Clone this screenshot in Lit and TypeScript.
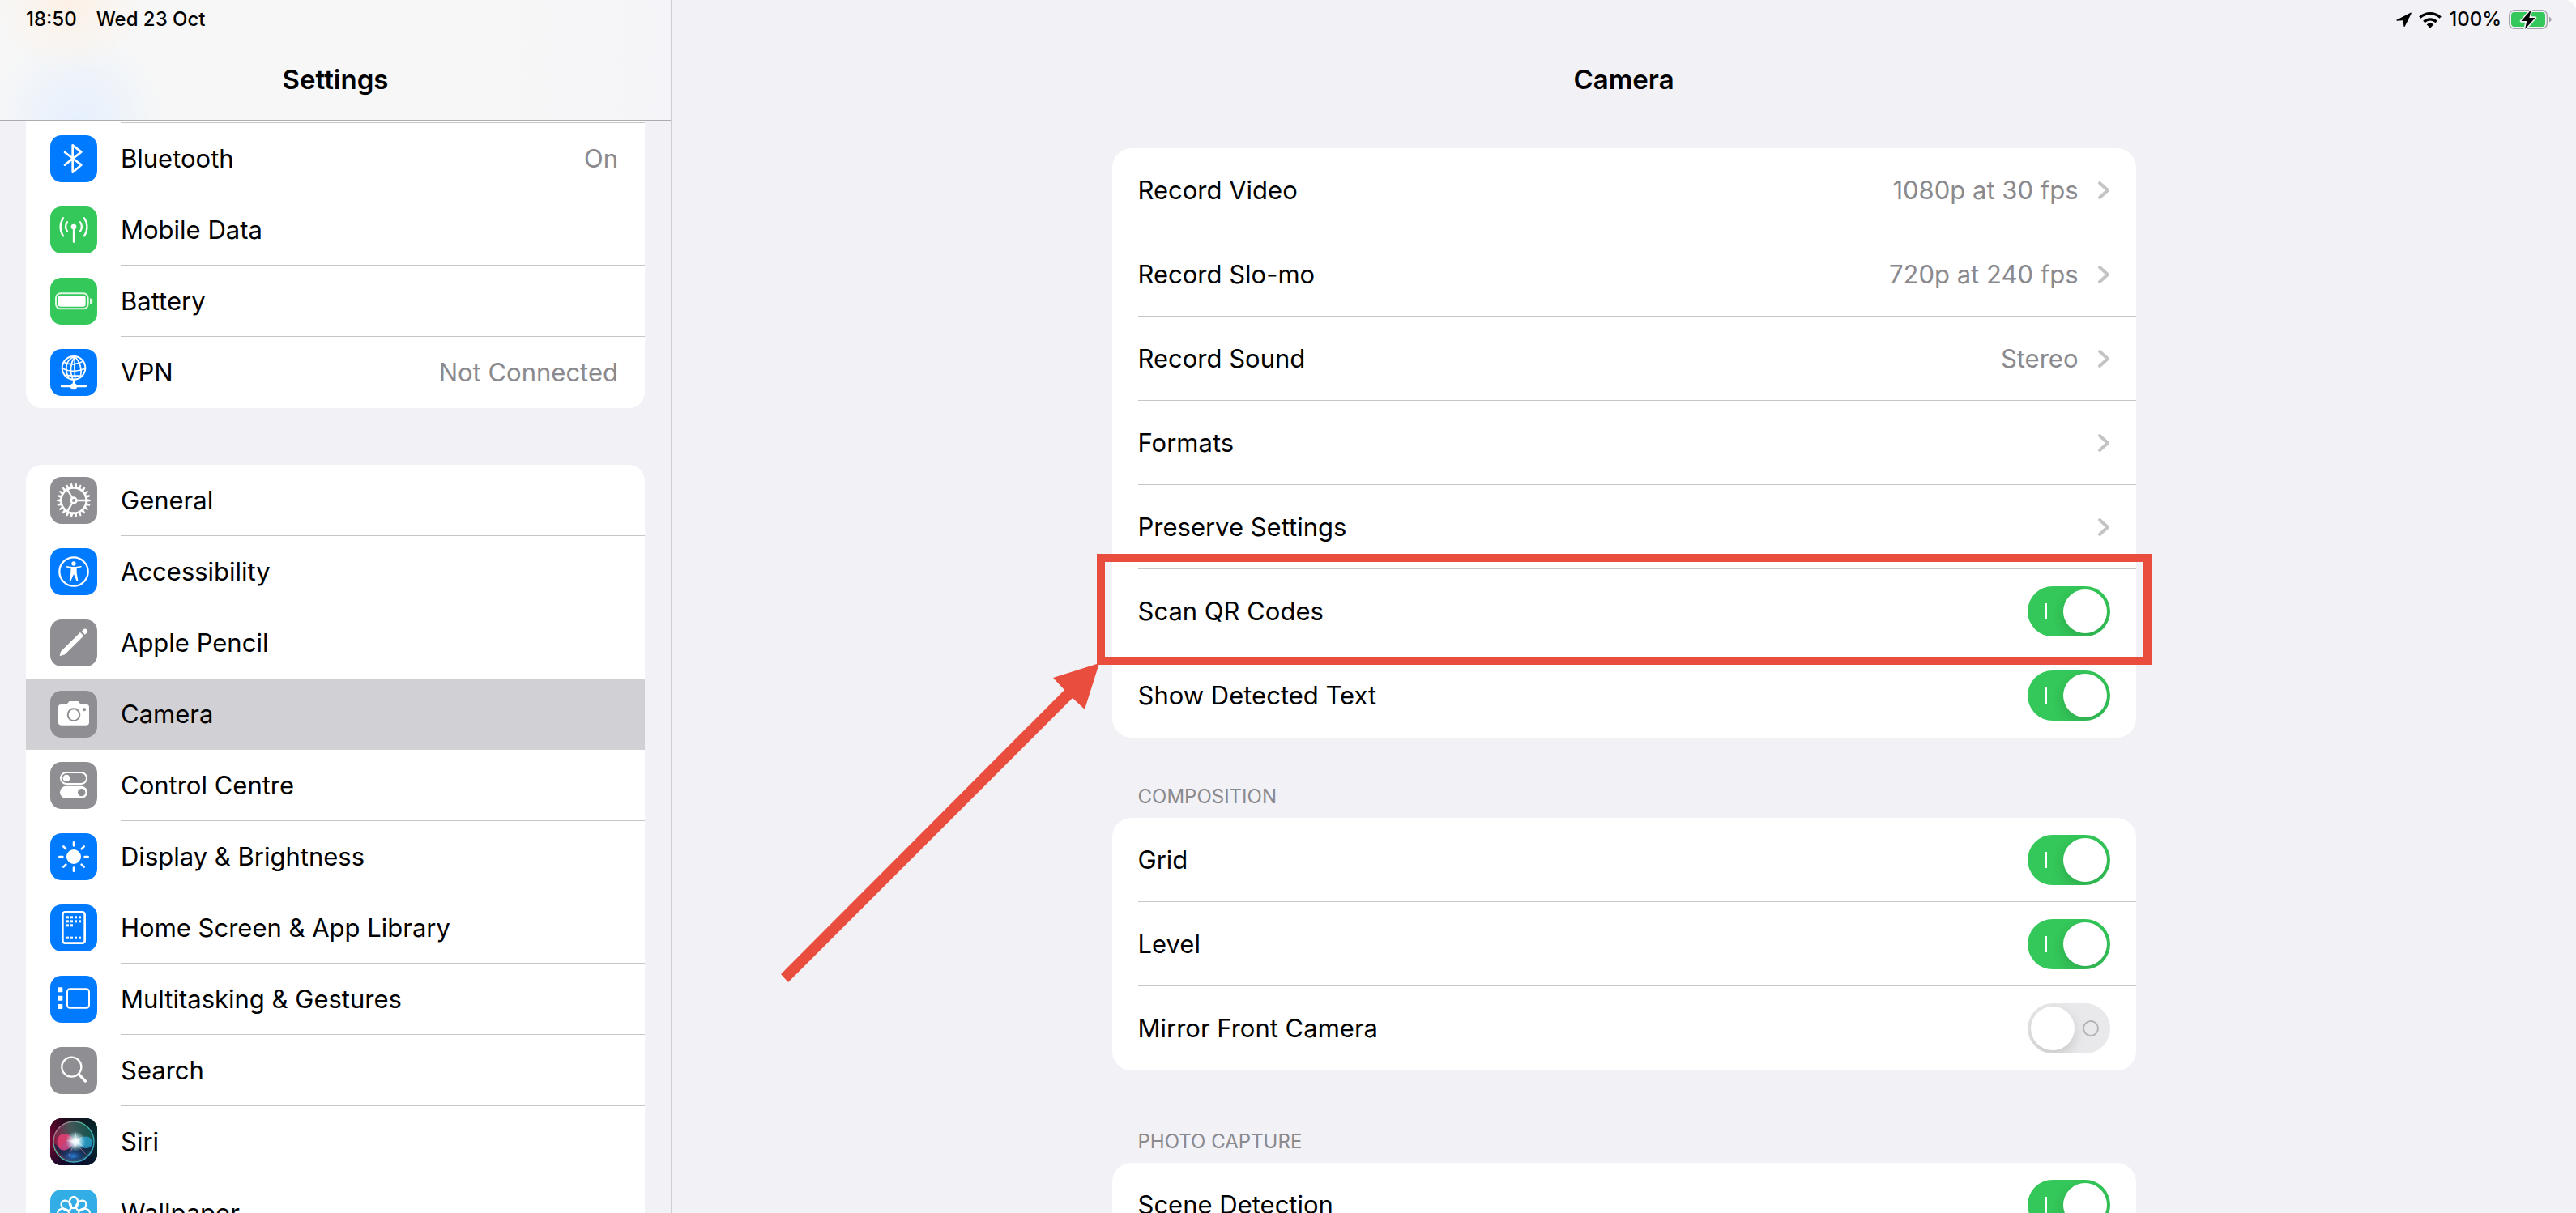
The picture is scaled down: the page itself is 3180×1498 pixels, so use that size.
import { LitElement, html, svg, css, nothing } from "lit";
import type { SVGTemplateResult } from "lit";
import { customElement, property } from "lit/decorators.js";
import { classMap } from "lit/directives/class-map.js";

type Tone = "blue" | "green" | "gray" | "cyan" | "dark";

interface NavItem {
  label: string;
  icon: string;
  tone: Tone;
  value?: string;
  selected?: boolean;
}

interface SettingRow {
  label: string;
  kind: "link" | "switch";
  value?: string;
  on?: boolean;
  marked?: boolean;
}

interface SettingGroup {
  title?: string;
  rows: SettingRow[];
}

const NAV_GROUPS: NavItem[][] = [
  [
    { label: "Bluetooth", icon: "bluetooth", tone: "blue", value: "On" },
    { label: "Mobile Data", icon: "antenna", tone: "green" },
    { label: "Battery", icon: "battery", tone: "green" },
    { label: "VPN", icon: "vpn", tone: "blue", value: "Not Connected" },
  ],
  [
    { label: "General", icon: "gear", tone: "gray" },
    { label: "Accessibility", icon: "accessibility", tone: "blue" },
    { label: "Apple Pencil", icon: "pencil", tone: "gray" },
    { label: "Camera", icon: "camera", tone: "gray", selected: true },
    { label: "Control Centre", icon: "switches", tone: "gray" },
    { label: "Display & Brightness", icon: "sun", tone: "blue" },
    { label: "Home Screen & App Library", icon: "home", tone: "blue" },
    { label: "Multitasking & Gestures", icon: "multitask", tone: "blue" },
    { label: "Search", icon: "search", tone: "gray" },
    { label: "Siri", icon: "siri", tone: "dark" },
    { label: "Wallpaper", icon: "flower", tone: "cyan" },
  ],
];

const SETTING_GROUPS: SettingGroup[] = [
  {
    rows: [
      { label: "Record Video", kind: "link", value: "1080p at 30 fps" },
      { label: "Record Slo-mo", kind: "link", value: "720p at 240 fps" },
      { label: "Record Sound", kind: "link", value: "Stereo" },
      { label: "Formats", kind: "link" },
      { label: "Preserve Settings", kind: "link" },
      { label: "Scan QR Codes", kind: "switch", on: true, marked: true },
      { label: "Show Detected Text", kind: "switch", on: true },
    ],
  },
  {
    title: "COMPOSITION",
    rows: [
      { label: "Grid", kind: "switch", on: true },
      { label: "Level", kind: "switch", on: true },
      { label: "Mirror Front Camera", kind: "switch", on: false },
    ],
  },
  {
    title: "PHOTO CAPTURE",
    rows: [{ label: "Scene Detection", kind: "switch", on: true }],
  },
];

const TONES: Record<Tone, string> = {
  blue: "#007aff",
  green: "#34c759",
  gray: "#8e8e93",
  cyan: "#32ade6",
  dark: "#12162a",
};

/** Outline of the gear's toothed rim, centred on 87,87. */
function gearTeeth(count: number, inner: number, outer: number): string {
  const point = (radius: number, turn: number) => {
    const a = turn * Math.PI * 2;
    return `${(87 + radius * Math.cos(a)).toFixed(1)} ${(87 + radius * Math.sin(a)).toFixed(1)}`;
  };
  let d = "";
  for (let i = 0; i < count; i++) {
    const steps: [number, number][] = [
      [inner, 0.16],
      [outer, 0.36],
      [outer, 0.64],
      [inner, 0.84],
    ];
    for (const [radius, offset] of steps) {
      d += `${d ? "L" : "M"}${point(radius, (i - 0.5 + offset) / count)}`;
    }
  }
  return d + "Z";
}

const dots = (y: number, n: number) =>
  [60, 75, 90, 105].slice(0, n).map((x) => svg`<rect x=${x} y=${y} width="9" height="9" fill="#fff"/>`);

const GLYPHS: Record<string, SVGTemplateResult> = {
  bluetooth: svg`<path d="M54 63 115 110 83 137V37L115 62 54 110" fill="none" stroke="#fff" stroke-width="8" stroke-linejoin="round" stroke-linecap="round"/>`,
  antenna: svg`<g fill="none" stroke="#fff" stroke-width="7" stroke-linecap="round">
      <path d="M48 43A58 58 0 0 0 48 109M63 58A31 31 0 0 0 63 92M126 43A58 58 0 0 1 126 109M111 58A31 31 0 0 1 111 92"/>
      <path d="M87 78V131"/></g><circle cx="87" cy="75" r="10" fill="#fff"/>`,
  battery: svg`<rect x="21" y="58" width="119" height="57" rx="17" fill="none" stroke="#fff" stroke-opacity=".85" stroke-width="6"/>
      <rect x="29" y="66" width="102" height="41" rx="9" fill="#fff"/>
      <path d="M147 75q10 3 10 12t-10 12Z" fill="#fff" fill-opacity=".85"/>`,
  vpn: svg`<g fill="none" stroke="#fff" stroke-width="5">
      <circle cx="87" cy="70" r="43" stroke-width="6"/>
      <path d="M91 27Q66 68 83 113M91 27Q62 40 60 64T68 106M91 27Q88 70 92 113M91 27Q122 62 112 104M50 49Q84 66 122 45M44 72Q84 92 129 73M56 97Q86 100 116 99"/>
      <path d="M87 113V130M42 138H132" stroke-width="7" stroke-linecap="round"/></g>
      <circle cx="87" cy="139" r="12" fill="#fff"/>`,
  gear: svg`<path d=${gearTeeth(22, 51, 63)} fill="#fff"/>
      <circle cx="87" cy="87" r="43" fill="#8e8e93"/>
      <path d="M87 87H131M87 87 65 49M87 87 65 125" stroke="#fff" stroke-width="7"/>
      <circle cx="87" cy="87" r="10" fill="#8e8e93" stroke="#fff" stroke-width="8"/>`,
  accessibility: svg`<circle cx="87" cy="87" r="53" fill="none" stroke="#fff" stroke-width="7"/>
      <circle cx="87" cy="57" r="8" fill="#fff"/>
      <path d="M60 66 80 69H94L114 66Q118 67 116 70L98 75V90L103 121Q101 125 98 122L88 98H86L76 122Q73 125 71 121L76 90V75L58 70Q56 67 60 66Z" fill="#fff"/>`,
  pencil: svg`<path d="M36 134 41 118 111 49 123 61 54 129Z" fill="#fff" stroke="#fff" stroke-width="2" stroke-linejoin="round"/>
      <path d="M117 45 122 37Q130 31 136 38T135 51L128 56Z" fill="#fff"/>`,
  camera: svg`<path d="M40 51H58Q62 51 64 47L67 43Q69 39 74 39H100Q105 39 107 43L110 47Q112 51 116 51H134Q144 51 144 61V118Q144 128 134 128H40Q30 128 30 118V61Q30 51 40 51Z" fill="#fff"/>
      <circle cx="87" cy="89" r="22" fill="none" stroke="#8e8e93" stroke-width="6"/><circle cx="126" cy="70" r="6" fill="#8e8e93"/>`,
  switches: svg`<rect x="39" y="39" width="96" height="42" rx="21" fill="none" stroke="#fff" stroke-width="6"/>
      <circle cx="60" cy="60" r="13" fill="#fff"/>
      <rect x="36" y="89" width="102" height="46" rx="23" fill="#fff"/><circle cx="116" cy="113" r="14" fill="#8e8e93"/>`,
  sun: svg`<circle cx="87" cy="87" r="27" fill="#fff"/><g stroke="#fff" stroke-width="8" stroke-linecap="round">
      <path d="M87 34V46M87 128V140M34 87H46M128 87H140M49 49 58 58M116 116 125 125M49 125 58 116M116 58 125 49"/></g>`,
  home: svg`<rect x="46" y="28" width="82" height="115" rx="9" fill="none" stroke="#fff" stroke-width="8"/>
      ${dots(43, 4)}${dots(58, 4)}${dots(73, 2)}${dots(119, 4)}`,
  multitask: svg`<g fill="#fff"><rect x="28" y="43" width="18" height="18" rx="2"/><rect x="28" y="74" width="18" height="18" rx="2"/><rect x="28" y="105" width="18" height="18" rx="2"/></g>
      <rect x="63" y="49" width="81" height="70" rx="10" fill="none" stroke="#fff" stroke-width="6"/>`,
  search: svg`<circle cx="79" cy="74" r="36" fill="none" stroke="#fff" stroke-width="7"/><path d="M106 101 130 126" stroke="#fff" stroke-width="10" stroke-linecap="round"/>`,
  siri: svg`<defs>
      <linearGradient id="siri-bg"><stop offset="0" stop-color="#7a0838"/><stop offset=".4" stop-color="#25142a"/><stop offset="1" stop-color="#063238"/></linearGradient>
      <linearGradient id="siri-shade" x1="0" y1="0" x2="0" y2="1"><stop offset="0" stop-color="#000" stop-opacity=".35"/><stop offset=".5" stop-color="#000" stop-opacity="0"/><stop offset="1" stop-color="#02082e" stop-opacity=".7"/></linearGradient>
      <linearGradient id="siri-orb" x1="0" y1=".5" x2="1" y2=".35"><stop offset="0" stop-color="#a8204c"/><stop offset=".45" stop-color="#5a7f78"/><stop offset="1" stop-color="#0f6a5c"/></linearGradient>
      <linearGradient id="siri-ring" x1="0" y1="0" x2="1" y2="1"><stop offset="0" stop-color="#e05a90"/><stop offset=".4" stop-color="#48b894"/><stop offset="1" stop-color="#3a9ce8"/></linearGradient>
      <radialGradient id="siri-glow"><stop offset="0" stop-color="#fff"/><stop offset=".3" stop-color="#e8fcff" stop-opacity=".9"/><stop offset="1" stop-color="#9fe8ff" stop-opacity="0"/></radialGradient>
      <radialGradient id="siri-floor"><stop offset="0" stop-color="#2c86e0"/><stop offset="1" stop-color="#0d2c6a" stop-opacity="0"/></radialGradient></defs>
      <rect width="174" height="174" fill="url(#siri-bg)"/><rect width="174" height="174" fill="url(#siri-shade)"/>
      <circle cx="87" cy="87" r="75" fill="url(#siri-orb)" fill-opacity=".65"/>
      <path d="M14 92Q50 128 94 88Q130 118 160 90A74 74 0 0 1 14 92Z" fill="#122447" fill-opacity=".8"/>
      <ellipse cx="84" cy="140" rx="52" ry="28" fill="url(#siri-floor)"/>
      <path d="M92 84C74 50 26 46 26 88S70 128 92 84Z" fill="#ee3f76" fill-opacity=".8"/>
      <path d="M92 84Q60 70 34 112Q66 134 92 84" fill="#b04a90" fill-opacity=".5"/>
      <path d="M96 92C112 62 152 58 155 88S118 118 96 92Z" fill="#2aa6d8" fill-opacity=".75"/>
      <path d="M90 92 68 140M98 96 132 134" stroke="#d88ab4" stroke-opacity=".6" stroke-width="3"/>
      <circle cx="87" cy="87" r="75" fill="none" stroke="url(#siri-ring)" stroke-width="4"/>
      <circle cx="94" cy="86" r="38" fill="url(#siri-glow)"/>
      <path d="M94 50 98 78 122 66 104 86 124 104 98 94 90 120 88 92 60 82 88 80Z" fill="#fff" fill-opacity=".45"/>`,
  flower: svg`<g fill="none" stroke="#fff" stroke-width="7">${[0, 45, 90, 135, 180, 225, 270, 315].map(
    (a) => svg`<ellipse cx="87" cy="48" rx="16" ry="21" transform=${`rotate(${a} 87 87)`}/>`,
  )}</g>`,
};

@customElement("settings-icon")
export class SettingsIcon extends LitElement {
  static styles = css`
    :host {
      display: block;
      flex: none;
      width: 58px;
      height: 58px;
      border-radius: 14px;
      overflow: hidden;
    }
    .glyph {
      display: block;
      width: 100%;
      height: 100%;
    }
  `;

  @property() name = "";
  @property() tone: Tone = "gray";

  render() {
    return html`<svg class="glyph" viewBox="0 0 174 174" aria-hidden="true">
      <rect width="174" height="174" fill=${TONES[this.tone]} />
      ${GLYPHS[this.name]}
    </svg>`;
  }
}

@customElement("app-root")
export class AppRoot extends LitElement {
  static styles = css`
    :host {
      display: grid;
      grid-template-columns: minmax(320px, 829px) minmax(0, 1fr);
      height: 100vh;
      overflow: hidden;
      background: #f2f1f6;
      color: #000;
      font-family: Inter, "Liberation Sans", sans-serif;
      font-size: 31px;
      line-height: 40px;
    }
    * {
      box-sizing: border-box;
    }
    ul {
      list-style: none;
      margin: 0;
      padding: 0;
    }
    a,
    label {
      color: inherit;
      text-decoration: none;
      cursor: pointer;
    }

    .sidebar {
      min-width: 0;
      overflow: hidden;
      border-right: 1px solid #d0d0d4;
    }
    .sidebar-head {
      border-bottom: 1px solid #adadb1;
      background:
        radial-gradient(circle at 84px 0, #fdf1e6 0, #fdf1e600 90px),
        radial-gradient(circle at 96px 148px, #e6f0fd 0, #e6f0fd00 110px),
        linear-gradient(90deg, #f7f7f7 70%, #f5f5f9);
    }
    .status {
      display: flex;
      align-items: center;
      height: 48px;
      font-size: 24px;
      line-height: 30px;
      font-weight: 500;
      padding: 0 32px;
    }
    .status-left {
      gap: 24px;
    }
    .status-right {
      justify-content: flex-end;
      gap: 9px;
      padding-right: 30px;
    }
    .status-icon {
      display: block;
      flex: none;
    }
    .title {
      display: flex;
      align-items: center;
      justify-content: center;
      height: 100px;
      margin: 0;
      font-size: 33px;
      line-height: 40px;
      font-weight: 600;
    }

    .nav {
      display: flex;
      flex-direction: column;
      gap: 70px;
      padding: 0 32px;
    }
    .nav-group {
      background: #fff;
      border-radius: 20px;
      overflow: hidden;
    }
    .nav-group.continued {
      padding-top: 2px;
      border-top-left-radius: 0;
      border-top-right-radius: 0;
    }
    .nav-group.continued::before {
      content: "";
      display: block;
      height: 1px;
      margin-left: 117px;
      background: #c6c6c8;
    }
    .nav-row {
      display: flex;
      align-items: center;
      gap: 29px;
      padding-left: 30px;
    }
    .nav-body {
      display: flex;
      align-items: center;
      justify-content: space-between;
      flex: 1;
      min-width: 0;
      height: 88px;
      padding-top: 1px;
      padding-right: 33px;
      border-bottom: 1px solid #c6c6c8;
    }
    .nav-item:last-child .nav-body,
    .nav-item.selected .nav-body,
    .nav-item.before-selected .nav-body {
      border-bottom-color: transparent;
    }
    .nav-item.selected {
      background: #d1d0d5;
    }
    .value {
      color: #8a8a8e;
    }

    .pane {
      min-width: 0;
      background: #fff;
    }
    .pane-surface {
      min-height: 100%;
      background: #f2f1f6;
      border-top-right-radius: 14px;
    }
    .groups {
      width: 100%;
      max-width: 1264px;
      margin: 0 auto;
      padding-top: 35px;
    }
    .group + .group {
      margin-top: 73px;
    }
    .group:first-child + .group {
      margin-top: 58px;
    }
    .group-title {
      margin: 0;
      padding: 0 32px 11px;
      font-size: 24px;
      line-height: 30px;
      font-weight: 400;
      color: #8a8a8e;
    }
    .card {
      background: #fff;
      border-radius: 24px;
    }
    .item {
      position: relative;
      padding-left: 32px;
    }
    .item-body {
      display: flex;
      align-items: center;
      gap: 22px;
      height: 104px;
      padding-top: 1px;
      padding-right: 32px;
      border-bottom: 1px solid #c6c6c8;
    }
    .item:last-child .item-body {
      border-bottom-color: transparent;
    }
    .item-label {
      flex: 1;
    }
    .chevron {
      display: block;
      flex: none;
    }

    .switch {
      appearance: none;
      display: flex;
      align-items: center;
      justify-content: space-between;
      flex: none;
      width: 102px;
      height: 62px;
      margin: 0;
      padding: 0 14px 0 4px;
      border-radius: 31px;
      background: #e9e9eb;
      overflow: hidden;
      cursor: pointer;
    }
    .switch::before {
      content: "";
      width: 54px;
      height: 54px;
      border-radius: 50%;
      background: #fff;
      box-shadow: 0 6px 16px #00000026;
    }
    .switch::after {
      content: "";
      box-sizing: border-box;
      width: 20px;
      height: 20px;
      border: 2px solid #b3b3b5;
      border-radius: 50%;
    }
    .switch:checked {
      flex-direction: row-reverse;
      padding: 0 4px 0 22px;
      background: #34c759;
    }
    .switch:checked::after {
      width: 2px;
      border: 0;
      border-radius: 0;
      background: #fff;
    }

    .marker {
      position: absolute;
      inset: -19px -19px -14px;
      border: 10px solid #e94d3d;
      pointer-events: none;
    }
    .arrow {
      position: absolute;
      top: 116px;
      right: calc(100% + 16px);
      pointer-events: none;
    }
  `;

  private renderNavGroup(items: NavItem[], index: number) {
    return html`<ul class=${classMap({ "nav-group": true, continued: index === 0 })}>
      ${items.map(
        (item, i) => html`<li
          class=${classMap({
            "nav-item": true,
            selected: !!item.selected,
            "before-selected": !!items[i + 1]?.selected,
          })}
        >
          <a class="nav-row" href="#" aria-current=${item.selected ? "page" : nothing}>
            <settings-icon name=${item.icon} tone=${item.tone}></settings-icon>
            <span class="nav-body">
              <span>${item.label}</span>
              ${item.value ? html`<span class="value">${item.value}</span>` : nothing}
            </span>
          </a>
        </li>`,
      )}
    </ul>`;
  }

  private renderRow(row: SettingRow, id: string) {
    if (row.kind === "link") {
      return html`<li class="item">
        <a class="item-body" href="#">
          <span class="item-label">${row.label}</span>
          ${row.value ? html`<span class="value">${row.value}</span>` : nothing}
          <svg class="chevron" width="17" height="24" viewBox="0 0 17 24" aria-hidden="true">
            <path d="M4 3 14 12 4 21" fill="none" stroke="#c4c4c7" stroke-width="4" stroke-linecap="round" stroke-linejoin="round" />
          </svg>
        </a>
      </li>`;
    }
    return html`<li class="item">
      <label class="item-body" for=${id}>
        <span class="item-label">${row.label}</span>
        <input class="switch" id=${id} type="checkbox" role="switch" .checked=${!!row.on} />
      </label>
      ${row.marked
        ? html`<div class="marker"></div>
            <svg class="arrow" width="393" height="394" viewBox="0 0 393 394" aria-hidden="true">
              <path d="M393 0 336 18 350 33 0 384 9 394 360 43 375 57Z" fill="#e94d3d" />
            </svg>`
        : nothing}
    </li>`;
  }

  render() {
    return html`
      <aside class="sidebar">
        <header class="sidebar-head">
          <div class="status status-left"><span>18:50</span><span>Wed 23 Oct</span></div>
          <h1 class="title">Settings</h1>
        </header>
        <nav class="nav">${NAV_GROUPS.map((g, i) => this.renderNavGroup(g, i))}</nav>
      </aside>
      <main class="pane">
        <div class="pane-surface">
          <div class="status status-right">
            <svg class="status-icon" width="19" height="19" viewBox="0 0 57 57" aria-hidden="true">
              <path d="M1 29 53 2Q57 1 56 5L32 53Q29 56 28 52L26 33Q26 31 24 31L3 32Q-1 31 1 29Z" />
            </svg>
            <svg class="status-icon" width="28" height="21" viewBox="0 0 84 63" aria-hidden="true">
              <path d="M4 23A55 55 0 0 1 80 23M19 39A33 33 0 0 1 65 39" fill="none" stroke="#000" stroke-width="10" />
              <path d="M29 49Q42 38 55 49L44 60Q42 62 40 60Z" />
            </svg>
            <span>100%</span>
            <svg class="status-icon" width="53" height="26" viewBox="0 0 159 78" aria-hidden="true">
              <rect x="2" y="5" width="140" height="68" rx="19" fill="none" stroke="#a3a2a7" stroke-width="4" />
              <rect x="9" y="12" width="126" height="54" rx="12" fill="#34c759" />
              <path d="M150 29q8 2 8 10t-8 10Z" fill="#a3a2a7" />
              <path d="M83 3 46 45H67L60 75 98 33H76Z" stroke="#f2f1f6" stroke-width="10" stroke-linejoin="round" />
              <path d="M83 3 46 45H67L60 75 98 33H76Z" />
            </svg>
          </div>
          <h2 class="title">Camera</h2>
          <div class="groups">
            ${SETTING_GROUPS.map(
              (group, g) => html`<section class="group">
                ${group.title ? html`<h3 class="group-title">${group.title}</h3>` : nothing}
                <ul class="card">
                  ${group.rows.map((row, r) => this.renderRow(row, `setting-${g}-${r}`))}
                </ul>
              </section>`,
            )}
          </div>
        </div>
      </main>
    `;
  }
}
